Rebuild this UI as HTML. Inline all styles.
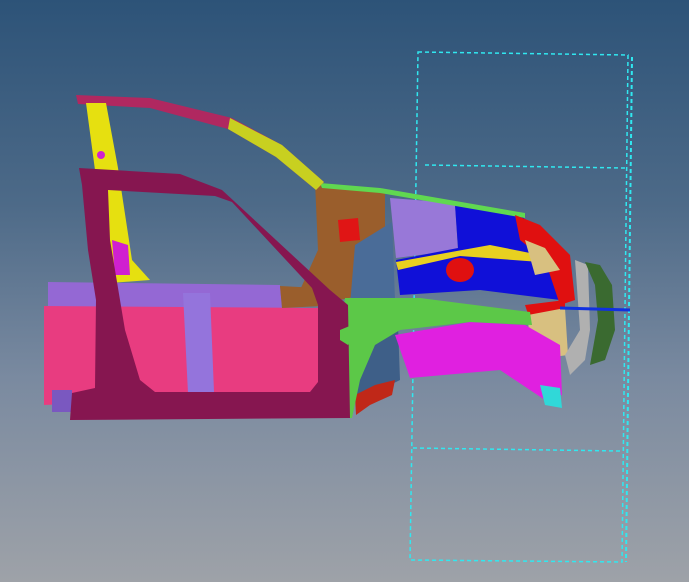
<!DOCTYPE html>
<html><head><style>
html,body{margin:0;padding:0;width:689px;height:582px;overflow:hidden}
body{background:linear-gradient(#2d5378 0%,#4d6a88 35%,#7a8aa0 65%,#9ea2a8 100%)}
svg{display:block}
</style></head><body>
<svg width="689" height="582" viewBox="0 0 689 582">
<g stroke="#30e8f0" stroke-width="1.5" fill="none" stroke-dasharray="4,3">
<path d="M418,52 L628,55 L622,562 L410,560 Z"/>
<path d="M425,165 L625,168"/>
<path d="M413,448 L620,451"/>
<path d="M632,57 L626,562" stroke-width="2"/>
</g>
<!-- brown panel -->
<path d="M315,182 L385,192 L385,290 L340,300 L290,302 L300,290 L318,250 Z" fill="#9a5e2c"/>
<path d="M338,220 L358,218 L360,240 L340,242 Z" fill="#e01515"/>
<!-- dark blue wheel arch -->
<path d="M355,245 L392,222 L395,300 L350,305 Z" fill="#4a6c98"/>
<path d="M360,320 L398,325 L400,380 L370,395 L355,400 L352,370 Z" fill="#3e5f88"/>
<path d="M355,395 L375,385 L395,380 L392,395 L370,405 L356,415 Z" fill="#c02818"/>
<!-- purple upper part -->
<path d="M390,198 L455,203 L458,250 L396,258 Z" fill="#9878d8"/>
<!-- blue -->
<path d="M455,205 L518,212 L545,240 L560,255 L560,300 L480,290 L400,295 L396,260 L458,248 Z" fill="#1010d8"/>
<path d="M396,262 L490,245 L540,255 L540,262 L460,256 L398,270 Z" fill="#e8d020"/>
<ellipse cx="460" cy="270" rx="14" ry="12" fill="#e01010"/>
<path d="M320,183 L380,188 L525,213 L525,218 L380,193 L322,188 Z" fill="#60d850"/>
<!-- red -->
<path d="M515,215 L540,225 L570,255 L575,300 L560,305 L545,260 L520,240 Z" fill="#e01010"/>
<path d="M525,305 L565,300 L565,315 L530,320 Z" fill="#e01010"/>
<path d="M528,315 L565,308 L568,355 L530,360 Z" fill="#d8c080"/>
<path d="M525,240 L545,248 L560,270 L535,275 Z" fill="#d8c080"/>
<path d="M575,260 L588,265 L590,330 L585,360 L570,375 L565,355 L580,330 Z" fill="#b0b0b0"/>
<path d="M585,262 L600,265 L612,285 L615,330 L605,360 L590,365 L598,320 L595,285 Z" fill="#3a6a30"/>
<line x1="560" y1="308" x2="630" y2="310" stroke="#1030e0" stroke-width="3"/>
<!-- magenta -->
<path d="M395,335 L470,322 L525,325 L560,345 L562,395 L545,400 L500,370 L410,378 Z" fill="#e020e0"/>
<path d="M540,385 L560,388 L562,408 L545,405 Z" fill="#30d8d8"/>
<!-- green lower beam -->
<path d="M345,298 L420,298 L530,312 L532,325 L470,322 L400,330 L375,345 L360,380 L352,418 L340,418 L340,330 Z" fill="#5cc848"/>
<!-- pink lower panel -->
<path d="M48,282 L280,285 L282,308 L48,308 Z" fill="#9468d4"/>
<path d="M44,306 L322,308 L324,392 L44,405 Z" fill="#e83c80"/>
<path d="M52,390 L72,390 L72,412 L52,412 Z" fill="#7a58c0"/>
<path d="M183,293 L210,293 L214,392 L188,393 Z" fill="#9474dc"/>
<path d="M280,286 L318,288 L322,306 L282,308 Z" fill="#9a5e2c"/>
<!-- roof rail -->
<path d="M76,95 L150,98 L232,118 L282,145 L324,182 L316,190 L276,157 L228,129 L150,108 L78,104 Z" fill="#b02860"/>
<path d="M230,118 L282,145 L324,182 L316,190 L276,157 L228,129 Z" fill="#c8d020"/>
<!-- yellow B-pillar -->
<path d="M86,103 L106,103 L118,168 L132,260 L150,280 L110,283 L95,270 L100,240 L95,170 Z" fill="#e6e010"/>
<path d="M112,240 L128,245 L130,275 L115,275 Z" fill="#d020d0"/>
<circle cx="101" cy="155" r="4" fill="#d020d0"/>
<!-- maroon frame -->
<path fill-rule="evenodd" fill="#861650" d="M79,168 L180,174 L222,190 L330,290 L348,305 L350,418 L70,420 L72,393 L95,388 L96,300 L88,250 L82,185 Z M108,190 L215,196 L232,202 L312,288 L318,305 L318,382 L310,392 L155,392 L140,380 L125,330 L110,240 Z"/>
<path d="M340,330 L352,325 L356,335 L348,345 L340,340 Z" fill="#5cc848"/>
</svg>
</body></html>
